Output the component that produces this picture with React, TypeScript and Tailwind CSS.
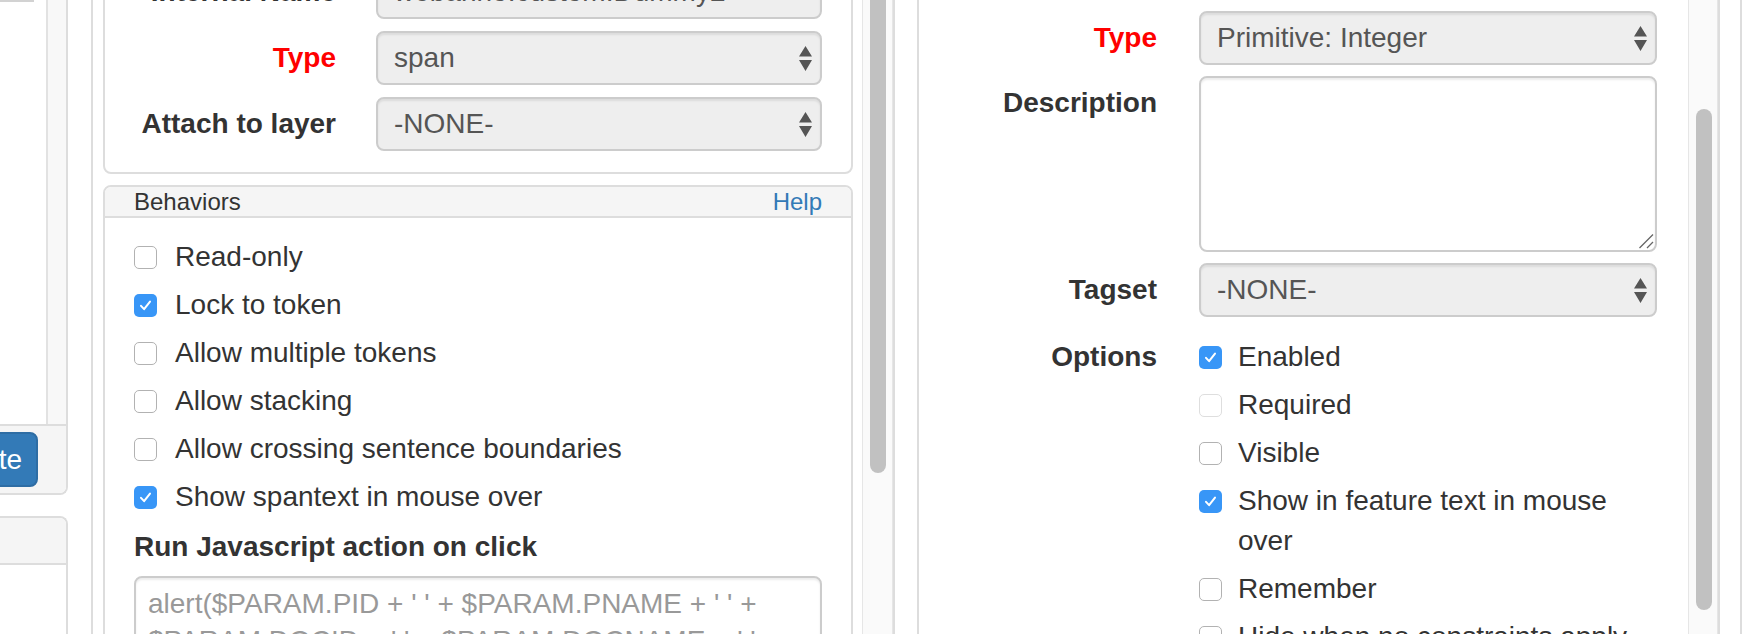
import type { ReactNode } from 'react';

// Up/down double arrow drawn on the right of the native-looking selects
function SelectArrows() {
  return (
    <svg width="13" height="25" viewBox="0 0 13 25" className="shrink-0">
      <path d="M0 10.5 L6.5 0 L13 10.5 Z M0 14 L13 14 L6.5 25 Z" fill="#555" />
    </svg>
  );
}

function SelectBox({ value, arrows = true }: { value: string; arrows?: boolean }) {
  return (
    <div className="flex h-[54px] w-full items-center justify-between overflow-hidden rounded-[8px] border-2 border-[#ccc] bg-[#eee] pl-[16px] pr-[8px] text-[#555] shadow-[inset_0_2px_2px_rgba(0,0,0,0.075)]">
      <span className="whitespace-nowrap">{value}</span>
      {arrows && <SelectArrows />}
    </div>
  );
}

function CheckBox({ checked, faint }: { checked?: boolean; faint?: boolean }) {
  if (checked) {
    return (
      <span className="flex h-[23px] w-[23px] shrink-0 items-center justify-center rounded-[5px] bg-[#3896f7]">
        <svg width="15" height="15" viewBox="0 0 15 15">
          <path
            d="M3 7.8 L6.1 11.2 L12 3.6"
            fill="none"
            stroke="#fff"
            strokeWidth="2"
            strokeLinecap="round"
            strokeLinejoin="round"
          />
        </svg>
      </span>
    );
  }
  return (
    <span
      className={`h-[23px] w-[23px] shrink-0 rounded-[5px] border bg-white ${
        faint ? 'border-[#dedede]' : 'border-[#b2b2b2]'
      }`}
    />
  );
}

function CheckRow({
  label,
  checked,
  faint,
  gap,
}: {
  label: string;
  checked?: boolean;
  faint?: boolean;
  gap: 'wide' | 'narrow';
}) {
  return (
    <div className={`flex items-start ${gap === 'wide' ? 'gap-[18px]' : 'gap-[16px]'}`}>
      <div className="flex h-[40px] items-center">
        <CheckBox checked={checked} faint={faint} />
      </div>
      <span className="leading-[40px]">{label}</span>
    </div>
  );
}

function LayerRow({ label, red, children }: { label: string; red?: boolean; children: ReactNode }) {
  return (
    <div className="flex items-center">
      <div className={`w-[231px] shrink-0 text-right font-bold ${red ? 'text-[#f00]' : ''}`}>{label}</div>
      <div className="ml-[40px] w-[446px] shrink-0">{children}</div>
    </div>
  );
}

// label column + control column of the feature form
function FeatureRow({
  label,
  red,
  align = 'center',
  children,
}: {
  label: string;
  red?: boolean;
  align?: 'center' | 'field' | 'list';
  children: ReactNode;
}) {
  return (
    <div className={`flex ${align === 'center' ? 'items-center' : 'items-start'}`}>
      <div
        className={`w-[238px] shrink-0 text-right font-bold ${red ? 'text-[#f00]' : ''} ${
          align === 'field' ? 'pt-[7px]' : ''
        }`}
      >
        {label}
      </div>
      <div className="ml-[42px] w-[458px] shrink-0">{children}</div>
    </div>
  );
}

const behaviors = [
  { label: 'Read-only' },
  { label: 'Lock to token', checked: true },
  { label: 'Allow multiple tokens' },
  { label: 'Allow stacking' },
  { label: 'Allow crossing sentence boundaries' },
  { label: 'Show spantext in mouse over', checked: true },
];

const options = [
  { label: 'Enabled', checked: true },
  { label: 'Required', faint: true },
  { label: 'Visible' },
  { label: 'Show in feature text in mouse over', checked: true },
  { label: 'Remember' },
  { label: 'Hide when no constraints apply' },
];

export default function App() {
  return (
    <div className="flex h-[634px] w-[1746px] overflow-hidden bg-white font-['Liberation_Sans',Arial,sans-serif] text-[28px] leading-[40px] text-[#333]">
      {/* layer list column */}
      <div className="flex w-[68px] shrink-0 flex-col">
        <div className="flex h-[495px] flex-col rounded-br-[8px] border-b-2 border-r-2 border-[#ddd]">
          <div className="flex flex-1">
            <div className="w-[46px] shrink-0">
              <div className="h-[2px] w-[34px] bg-[#d2d2d2]" />
            </div>
            <div className="flex-1 border-l-2 border-[#e2e2e2] bg-[#f8f8f8]" />
          </div>
          <div className="flex h-[69px] items-center justify-end overflow-hidden rounded-br-[6px] border-t-2 border-[#ddd] bg-[#f5f5f5] pr-[28px]">
            <button className="h-[55px] shrink-0 rounded-[8px] border-2 border-[#2e6da4] bg-[#337ab7] px-[14px] leading-[40px] text-white">
              Create
            </button>
          </div>
        </div>
        <div className="mt-[21px] flex flex-1 flex-col rounded-tr-[8px] border-r-2 border-t-2 border-[#ddd]">
          <div className="h-[47px] rounded-tr-[6px] border-b-2 border-[#ddd] bg-[#f5f5f5]" />
          <div className="flex-1" />
        </div>
      </div>

      {/* layer details column */}
      <div className="ml-[23px] flex w-[804px] shrink-0 border-x-2 border-[#ddd]">
        <div className="w-[769px] shrink-0 overflow-hidden pl-[10px] pr-[9px]">
          <div className="-mt-[48px] rounded-[8px] border-2 border-[#ddd] pb-[21px] pt-[11px]">
            <div className="flex flex-col gap-[12px]">
              <LayerRow label="Internal Name">
                <SelectBox value="webanno.custom.Dummy2" arrows={false} />
              </LayerRow>
              <LayerRow label="Type" red>
                <SelectBox value="span" />
              </LayerRow>
              <LayerRow label="Attach to layer">
                <SelectBox value="-NONE-" />
              </LayerRow>
            </div>
          </div>

          <div className="mt-[11px] rounded-[8px] border-2 border-[#ddd]">
            <div className="flex h-[31px] items-center justify-between rounded-t-[6px] border-b-2 border-[#ddd] bg-[#f5f5f5] px-[29px] text-[24px] leading-[28px]">
              <span>Behaviors</span>
              <span className="text-[#337ab7]">Help</span>
            </div>
            <div className="px-[29px] pt-[19px]">
              <div className="flex flex-col gap-[8px]">
                {behaviors.map((b) => (
                  <CheckRow key={b.label} label={b.label} checked={b.checked} gap="wide" />
                ))}
              </div>
              <div className="mt-[10px] font-bold">Run Javascript action on click</div>
              <div className="mt-[9px] h-[140px] rounded-[8px] border-2 border-[#ccc] px-[12px] pt-[7px] leading-[37px] text-[#999] shadow-[inset_0_2px_2px_rgba(0,0,0,0.075)]">
                <div className="whitespace-nowrap">alert($PARAM.PID + ' ' + $PARAM.PNAME + ' ' +</div>
                <div className="whitespace-nowrap">$PARAM.DOCID + ' ' + $PARAM.DOCNAME + ' ' +</div>
              </div>
            </div>
          </div>
        </div>
        <div className="w-[31px] shrink-0 border-x border-[#e6e6e6] bg-[#fafafa] pl-[7px]">
          <div className="-mt-[20px] h-[493px] w-[16px] rounded-full bg-[#c1c1c1]" />
        </div>
      </div>

      {/* feature details column */}
      <div className="ml-[22px] flex w-[803px] shrink-0 border-x-2 border-[#ddd]">
        <div className="w-[769px] shrink-0 overflow-hidden pt-[11px]">
          <FeatureRow label="Type" red>
            <SelectBox value="Primitive: Integer" />
          </FeatureRow>
          <div className="mt-[11px]">
            <FeatureRow label="Description" align="field">
              <div className="relative h-[176px] rounded-[8px] border-2 border-[#ccc] bg-white shadow-[inset_0_2px_2px_rgba(0,0,0,0.075)]">
                <svg width="16" height="16" viewBox="0 0 16 16" className="absolute bottom-[1px] right-[1px]">
                  <path d="M1.5 15 L15 1.5 M9 15 L15 9" stroke="#666" strokeWidth="1.3" fill="none" />
                </svg>
              </div>
            </FeatureRow>
          </div>
          <div className="mt-[11px]">
            <FeatureRow label="Tagset">
              <SelectBox value="-NONE-" />
            </FeatureRow>
          </div>
          <div className="mt-[20px]">
            <FeatureRow label="Options" align="list">
              <div className="flex flex-col gap-[8px]">
                {options.map((o) => (
                  <CheckRow key={o.label} label={o.label} checked={o.checked} faint={o.faint} gap="narrow" />
                ))}
              </div>
            </FeatureRow>
          </div>
        </div>
        <div className="w-[30px] shrink-0 border-x border-[#e6e6e6] bg-[#fafafa] pl-[7px]">
          <div className="mt-[109px] h-[501px] w-[16px] rounded-full bg-[#c1c1c1]" />
        </div>
      </div>

      <div className="ml-[20px] w-[6px] shrink-0 border-l-2 border-[#ddd]" />
    </div>
  );
}
